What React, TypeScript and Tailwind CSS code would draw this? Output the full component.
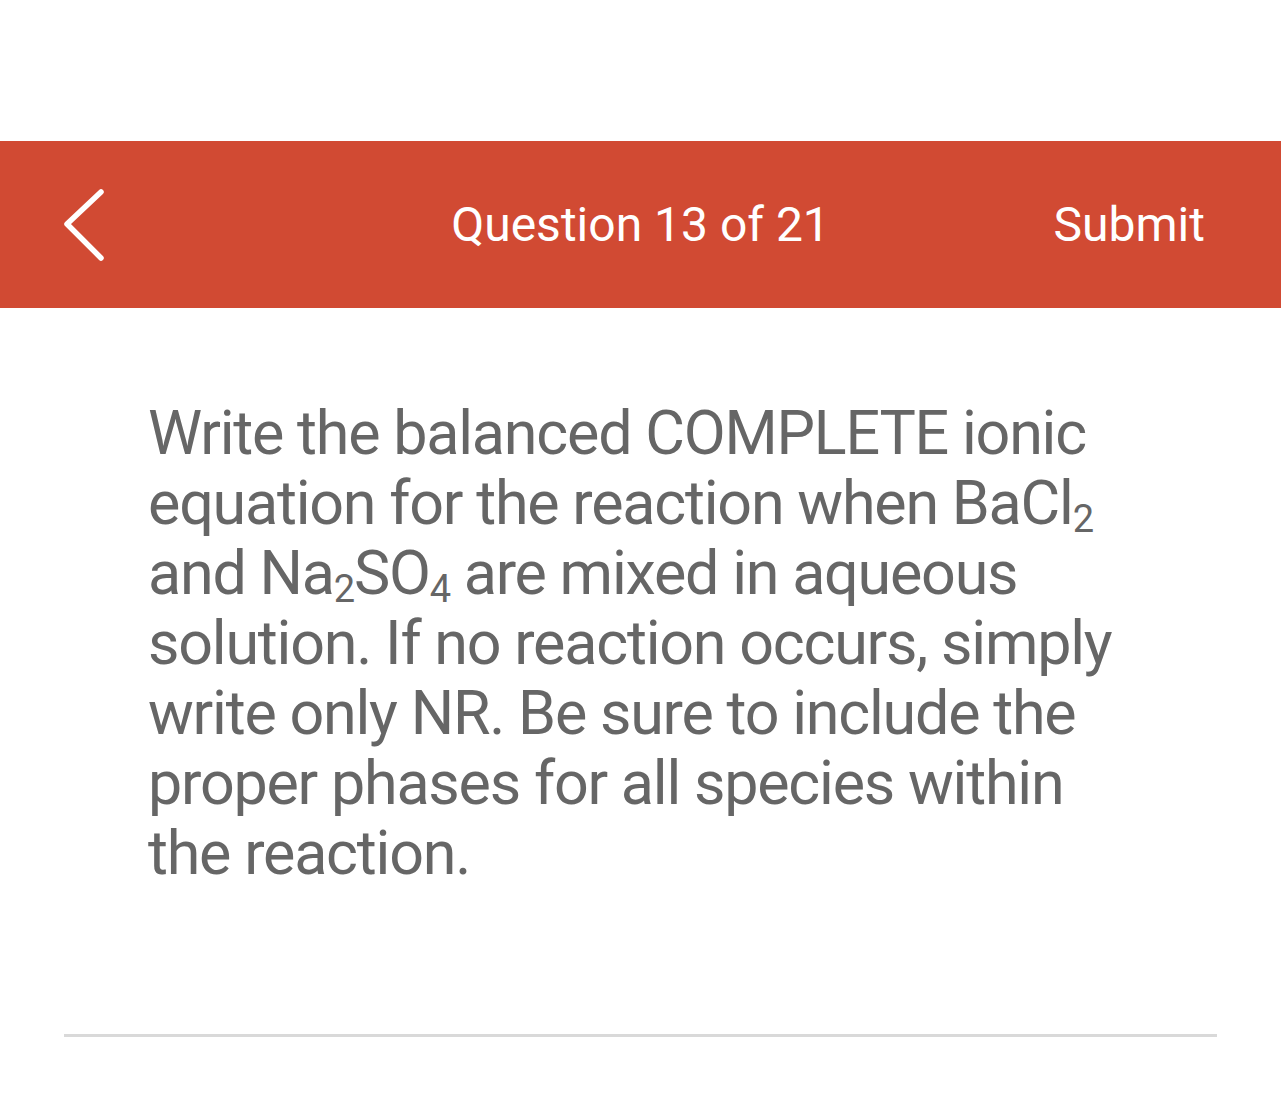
function Sub({ children }: { children: React.ReactNode }) {
  return <span className="align-[-8px] text-[38px] leading-none">{children}</span>;
}

export default function App() {
  return (
    <div className="min-h-[1106px] w-full bg-white" style={{ fontFamily: "Roboto, Inter, sans-serif" }}>
      <div className="h-[141px]" />
      <header className="grid h-[167px] grid-cols-[1fr_auto_1fr] items-center bg-[#d14a33] px-[62px] text-white">
        <div className="flex items-center">
          <button className="flex h-[72px] w-[44px] items-center">
            <svg width="44" height="74" viewBox="0 0 44 74" fill="none">
              <path d="M39 4 L5 36 L39 70" stroke="white" strokeWidth="5.5" strokeLinecap="round" strokeLinejoin="round" />
            </svg>
          </button>
        </div>
        <h1 className="text-[48px] font-normal leading-none">Question 13 of 21</h1>
        <div className="flex justify-end pr-[14px]">
          <button className="text-[48px] font-normal leading-none">Submit</button>
        </div>
      </header>

      <main className="px-[148px] pt-[90px]">
        <p className="text-[61px] leading-[70px] tracking-[-0.02em] text-[#666666]">
          Write the balanced COMPLETE ionic equation for the reaction when BaCl<Sub>2</Sub> and Na<Sub>2</Sub>SO
          <Sub>4</Sub> are mixed in aqueous solution. If no reaction occurs, simply write only NR. Be sure to include
          the proper phases for all species within the reaction.
        </p>
      </main>

      <div className="mx-[64px] mt-[146px] h-[3px] bg-[#d9d9d9]" />
    </div>
  );
}
